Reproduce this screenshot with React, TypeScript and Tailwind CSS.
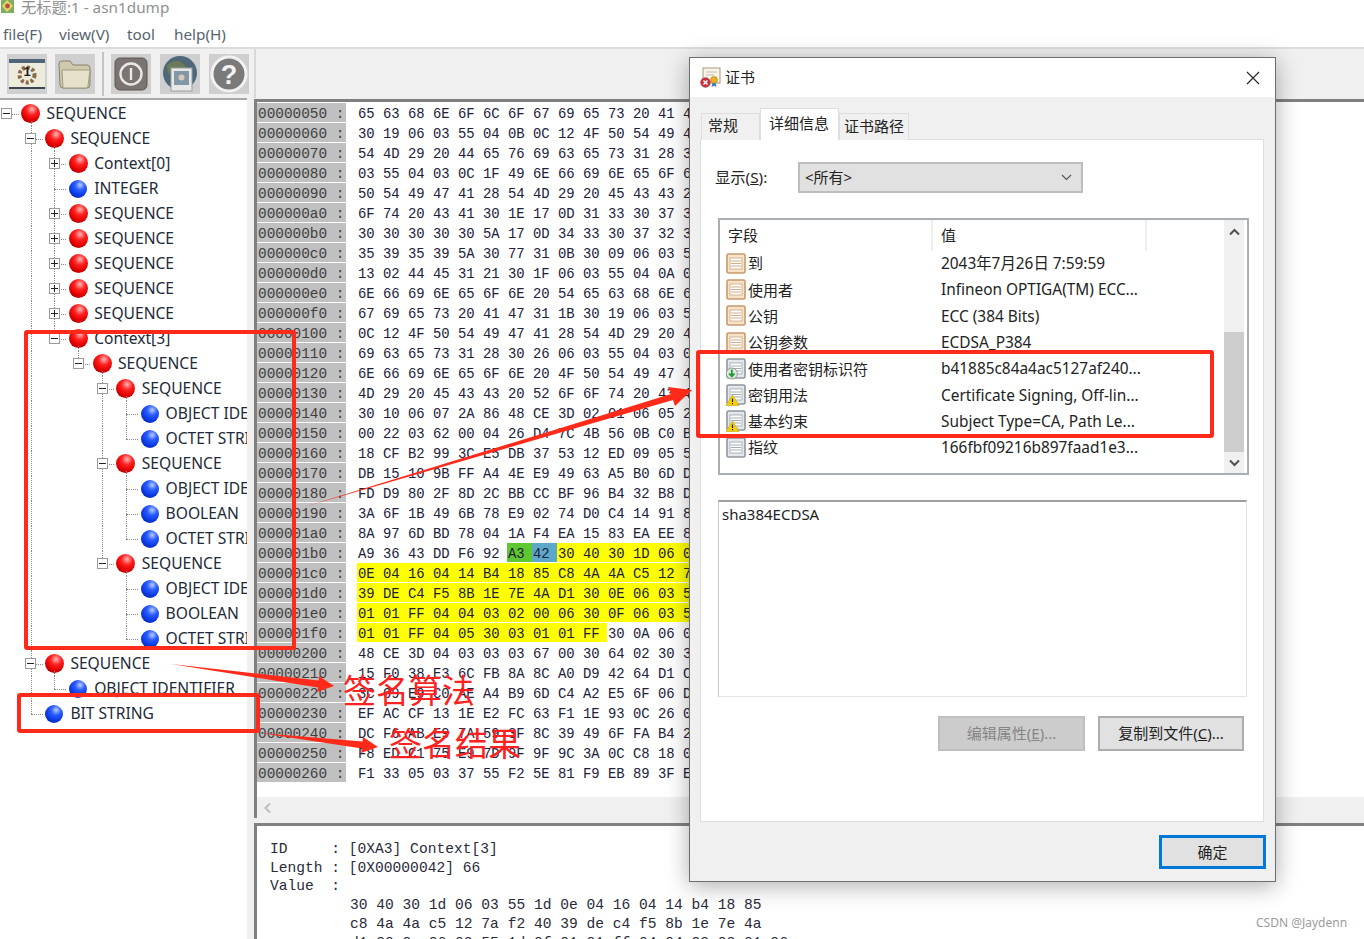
import React from "react";

const sans = "[font-family:'Noto_Sans','Noto_Sans_CJK_SC',sans-serif]";
const mono = "[font-family:'Liberation_Mono',monospace]";

type Row = { d: number; t: string; c: "r" | "b"; e?: "+" | "-"; l: number[]; last?: boolean };
const tree: Row[] = [
  { d: 0, t: "SEQUENCE", c: "r", e: "-", l: [], last: true },
  { d: 1, t: "SEQUENCE", c: "r", e: "-", l: [] },
  { d: 2, t: "Context[0]", c: "r", e: "+", l: [1] },
  { d: 2, t: "INTEGER", c: "b", l: [1] },
  { d: 2, t: "SEQUENCE", c: "r", e: "+", l: [1] },
  { d: 2, t: "SEQUENCE", c: "r", e: "+", l: [1] },
  { d: 2, t: "SEQUENCE", c: "r", e: "+", l: [1] },
  { d: 2, t: "SEQUENCE", c: "r", e: "+", l: [1] },
  { d: 2, t: "SEQUENCE", c: "r", e: "+", l: [1] },
  { d: 2, t: "Context[3]", c: "r", e: "-", l: [1], last: true },
  { d: 3, t: "SEQUENCE", c: "r", e: "-", l: [1], last: true },
  { d: 4, t: "SEQUENCE", c: "r", e: "-", l: [1] },
  { d: 5, t: "OBJECT IDENTIFIER", c: "b", l: [1, 4] },
  { d: 5, t: "OCTET STRING", c: "b", l: [1, 4], last: true },
  { d: 4, t: "SEQUENCE", c: "r", e: "-", l: [1] },
  { d: 5, t: "OBJECT IDENTIFIER", c: "b", l: [1, 4] },
  { d: 5, t: "BOOLEAN", c: "b", l: [1, 4] },
  { d: 5, t: "OCTET STRING", c: "b", l: [1, 4], last: true },
  { d: 4, t: "SEQUENCE", c: "r", e: "-", l: [1], last: true },
  { d: 5, t: "OBJECT IDENTIFIER", c: "b", l: [1] },
  { d: 5, t: "BOOLEAN", c: "b", l: [1] },
  { d: 5, t: "OCTET STRING", c: "b", l: [1], last: true },
  { d: 1, t: "SEQUENCE", c: "r", e: "-", l: [] },
  { d: 2, t: "OBJECT IDENTIFIER", c: "b", l: [1], last: true },
  { d: 1, t: "BIT STRING", c: "b", l: [], last: true },
];

const hex: [string, string][] = [
  ["00000050", "65 63 68 6E 6F 6C 6F 67 69 65 73 20 41 4"],
  ["00000060", "30 19 06 03 55 04 0B 0C 12 4F 50 54 49 4"],
  ["00000070", "54 4D 29 20 44 65 76 69 63 65 73 31 28 3"],
  ["00000080", "03 55 04 03 0C 1F 49 6E 66 69 6E 65 6F 6"],
  ["00000090", "50 54 49 47 41 28 54 4D 29 20 45 43 43 2"],
  ["000000a0", "6F 74 20 43 41 30 1E 17 0D 31 33 30 37 3"],
  ["000000b0", "30 30 30 30 30 5A 17 0D 34 33 30 37 32 3"],
  ["000000c0", "35 39 35 39 5A 30 77 31 0B 30 09 06 03 5"],
  ["000000d0", "13 02 44 45 31 21 30 1F 06 03 55 04 0A 0"],
  ["000000e0", "6E 66 69 6E 65 6F 6E 20 54 65 63 68 6E 6"],
  ["000000f0", "67 69 65 73 20 41 47 31 1B 30 19 06 03 5"],
  ["00000100", "0C 12 4F 50 54 49 47 41 28 54 4D 29 20 4"],
  ["00000110", "69 63 65 73 31 28 30 26 06 03 55 04 03 0"],
  ["00000120", "6E 66 69 6E 65 6F 6E 20 4F 50 54 49 47 4"],
  ["00000130", "4D 29 20 45 43 43 20 52 6F 6F 74 20 43 4"],
  ["00000140", "30 10 06 07 2A 86 48 CE 3D 02 01 06 05 2"],
  ["00000150", "00 22 03 62 00 04 26 D4 7C 4B 56 0B C0 B"],
  ["00000160", "18 CF B2 99 3C E5 DB 37 53 12 ED 09 05 5"],
  ["00000170", "DB 15 10 9B FF A4 4E E9 49 63 A5 B0 6D D"],
  ["00000180", "FD D9 80 2F 8D 2C BB CC BF 96 B4 32 B8 D"],
  ["00000190", "3A 6F 1B 49 6B 78 E9 02 74 D0 C4 14 91 8"],
  ["000001a0", "8A 97 6D BD 78 04 1A F4 EA 15 83 EA EE 8"],
  ["000001b0", "A9 36 43 DD F6 92 A3 42 30 40 30 1D 06 0"],
  ["000001c0", "0E 04 16 04 14 B4 18 85 C8 4A 4A C5 12 7"],
  ["000001d0", "39 DE C4 F5 8B 1E 7E 4A D1 30 0E 06 03 5"],
  ["000001e0", "01 01 FF 04 04 03 02 00 06 30 0F 06 03 5"],
  ["000001f0", "01 01 FF 04 05 30 03 01 01 FF 30 0A 06 0"],
  ["00000200", "48 CE 3D 04 03 03 03 67 00 30 64 02 30 3"],
  ["00000210", "15 F0 38 E3 6C FB 8A 8C A0 D9 42 64 D1 C"],
  ["00000220", "3C 09 E9 C0 AE A4 B9 6D C4 A2 E5 6F 06 D"],
  ["00000230", "EF AC CF 13 1E E2 FC 63 F1 1E 93 0C 26 0"],
  ["00000240", "DC F6 AB E9 7A 59 3F 8C 39 49 6F FA B4 2"],
  ["00000250", "F8 ED C1 75 E9 7D 9F 9F 9C 3A 0C C8 18 0"],
  ["00000260", "F1 33 05 03 37 55 F2 5E 81 F9 EB 89 3F E"],
];

function cellColor(addr: string, i: number): string {
  if (addr === "000001b0") {
    if (i === 6) return "bg-[#5fc72f]";
    if (i === 7) return "bg-[#5ba8cb]";
    if (i > 7) return "bg-[#ffff00]";
  }
  if (addr === "000001c0" || addr === "000001d0" || addr === "000001e0") return "bg-[#ffff00]";
  if (addr === "000001f0" && i < 10) return "bg-[#ffff00]";
  return "";
}

function Ball({ c }: { c: "r" | "b" }) {
  return c === "r" ? (
    <span className="block w-[19px] h-[19px] rounded-full bg-[radial-gradient(circle_at_58%_28%,#ffb8b8_0%,#ff2020_32%,#e00000_62%,#8c0000_100%)]" />
  ) : (
    <span className="block w-[18px] h-[18px] rounded-full bg-[radial-gradient(circle_at_62%_28%,#b8ccff_0%,#2a5cff_30%,#0a38e0_62%,#06208c_100%)]" />
  );
}

function TreeRow({ r }: { r: Row }) {
  const cols = Array.from({ length: r.d }, (_, i) => i);
  return (
    <div className="flex items-center h-[25px] w-max whitespace-nowrap">
      {cols.map((i) => (
        <div key={i} className="relative w-[23.8px] h-full">
          {r.l.includes(i) && <span className="absolute left-1/2 top-0 bottom-0 border-l border-dotted border-[#8a8a8a]" />}
        </div>
      ))}
      <div className="relative w-[23.8px] h-full flex items-center justify-center">
        {r.d > 0 && <span className="absolute left-1/2 top-0 h-1/2 border-l border-dotted border-[#8a8a8a]" />}
        {r.d > 0 && !r.last && <span className="absolute left-1/2 top-1/2 bottom-0 border-l border-dotted border-[#8a8a8a]" />}
        <span className="absolute left-1/2 right-0 top-1/2 border-t border-dotted border-[#8a8a8a]" />
        {r.e && (
          <span className="relative w-[11px] h-[11px] border border-[#9a9a9a] bg-white flex items-center justify-center">
            <span className="w-[7px] h-px bg-[#222]" />
            {r.e === "+" && <span className="absolute w-px h-[7px] bg-[#222]" />}
          </span>
        )}
      </div>
      <div className="relative w-[23.8px] h-full flex items-center justify-center">
        {r.e === "-" && <span className="absolute left-1/2 top-[20px] bottom-0 border-l border-dotted border-[#8a8a8a]" />}
        <Ball c={r.c} />
      </div>
      <span className={`ml-[4px] text-[15.6px] leading-[25px] text-[#1d2a38] ${sans}`}>{r.t}</span>
    </div>
  );
}

function Tb({ children }: { children: React.ReactNode }) {
  return <div className="w-[40px] h-[40px] bg-[#cfcfcf] flex items-center justify-center shrink-0">{children}</div>;
}

function DocIcon({ tone, badge }: { tone: "o" | "g"; badge?: "warn" | "down" | "none" }) {
  const edge = tone === "o" ? "#c89a6e" : "#8f979f";
  const fill = tone === "o" ? "#f6e3c8" : "#e4e8ec";
  return (
    <svg width="21" height="22" viewBox="0 0 21 22" className="shrink-0">
      <rect x="1" y="1" width="18" height="19" rx="1.5" fill={fill} stroke={edge} strokeWidth="1.6" />
      <rect x="4" y="5" width="12" height="11" fill="#ffffff" stroke={edge} strokeWidth="0.7" />
      <path d="M5 8h10M5 10.5h10M5 13h10" stroke={edge} strokeWidth="0.8" />
      {badge === "warn" && (
        <g>
          <path d="M6.5 11 L13 21.5 H0 Z" fill="#f6d000" stroke="#b59a00" strokeWidth="0.5" />
          <path d="M6.5 14.5v3.5M6.5 19v1.3" stroke="#222" strokeWidth="1.2" />
        </g>
      )}
      {badge === "down" && (
        <g>
          <circle cx="5.8" cy="15.5" r="5.5" fill="#dfe8e2" stroke="#7d8a80" strokeWidth="0.8" />
          <path d="M5.8 11.5v6M3.1 15.5l2.7 3 2.7-3" stroke="#1c9a2c" strokeWidth="1.8" fill="none" />
        </g>
      )}
    </svg>
  );
}

const fields: { n: string; v: string; tone: "o" | "g"; b?: "warn" | "down" }[] = [
  { n: "到", v: "2043年7月26日 7:59:59", tone: "o" },
  { n: "使用者", v: "Infineon OPTIGA(TM) ECC...", tone: "o" },
  { n: "公钥", v: "ECC (384 Bits)", tone: "o" },
  { n: "公钥参数", v: "ECDSA_P384", tone: "o" },
  { n: "使用者密钥标识符", v: "b41885c84a4ac5127af240...", tone: "g", b: "down" },
  { n: "密钥用法", v: "Certificate Signing, Off-lin...", tone: "g", b: "warn" },
  { n: "基本约束", v: "Subject Type=CA, Path Le...", tone: "g", b: "warn" },
  { n: "指纹", v: "166fbf09216b897faad1e3...", tone: "g" },
];

export default function App() {
  return (
    <div className={`relative w-[1364px] h-[939px] overflow-hidden bg-white flex flex-col ${sans}`}>
      {/* title */}
      <div className="h-[18px] flex items-start shrink-0 overflow-hidden">
        <svg width="16" height="16" viewBox="0 0 16 16" className="-mt-[2px] shrink-0">
          <rect x="1" y="1" width="13" height="14" fill="#7fae62" />
          <path d="M2 8l5-6 6 6-6 6z" fill="#e8d36a" />
          <circle cx="7.5" cy="8" r="2.4" fill="#b0553c" />
        </svg>
        <span className="ml-[5px] text-[15.3px] leading-[14px] text-[#8f8f8f]">无标题:1 - asn1dump</span>
      </div>
      {/* menu */}
      <div className="h-[29px] flex items-center shrink-0 text-[15.3px] text-[#56636f] pl-[3px] pt-[3px]">
        <span className="w-[56px]">file(F)</span>
        <span className="w-[68px]">view(V)</span>
        <span className="w-[47px]">tool</span>
        <span>help(H)</span>
      </div>
      {/* toolbar */}
      <div className="h-[51px] shrink-0 bg-[#f0f0f0] border-t-2 border-[#dcdcdc] flex items-center pl-[7px]">
        <div className="flex items-center gap-[8px]">
          <Tb>
            <svg width="38" height="34" viewBox="0 0 38 34">
              <rect x="1" y="2" width="36" height="30" fill="#ecebdc" />
              <rect x="1" y="2" width="36" height="4" fill="#51657a" />
              <rect x="1" y="30" width="36" height="2" fill="#3c4650" />
              <circle cx="19" cy="18" r="7.5" fill="none" stroke="#8a6a4a" strokeWidth="4" strokeDasharray="3 2" />
              <circle cx="19" cy="18" r="5" fill="#ecebdc" />
              <text x="19" y="19" textAnchor="middle" fontSize="13" fontWeight="700" fill="#222" fontFamily="Liberation Sans">1</text>
            </svg>
          </Tb>
          <Tb>
            <svg width="34" height="32" viewBox="0 0 34 32">
              <path d="M1 6q0-3 3-3h8l3 4h14q3 0 3 3v17q0 3-3 3H5q-3 0-3-3z" fill="#cfc9ae" stroke="#87826e" strokeWidth="1" />
              <path d="M4 12h28l-2 16q-.3 2-2 2H5z" fill="#e6e1c8" stroke="#a09a80" strokeWidth="1" />
            </svg>
          </Tb>
        </div>
        <div className="w-[2px] h-[44px] bg-[#c4c4c4] mx-[7px]" />
        <div className="flex items-center gap-[9px]">
          <Tb>
            <svg width="34" height="34" viewBox="0 0 34 34">
              <rect x="1" y="1" width="32" height="32" rx="5" fill="#7c7470" stroke="#5a5552" />
              <circle cx="17" cy="17" r="10.5" fill="none" stroke="#e8e8e8" strokeWidth="2.4" />
              <path d="M17 11v12" stroke="#e8e8e8" strokeWidth="2.4" />
            </svg>
          </Tb>
          <Tb>
            <svg width="36" height="38" viewBox="0 0 36 38">
              <circle cx="18" cy="18" r="17" fill="#4f6878" />
              <path d="M5 10q8-6 14-3l5 5-4 3-8-2-6 6z" fill="#6d7a58" />
              <rect x="9" y="13" width="21" height="23" fill="#e8e8e6" stroke="#9aa0a4" />
              <rect x="12" y="16" width="15" height="14" fill="#8397a8" />
              <circle cx="19.5" cy="22.5" r="3" fill="#d8c8b8" />
            </svg>
          </Tb>
          <Tb>
            <svg width="38" height="38" viewBox="0 0 38 38">
              <circle cx="19" cy="19" r="17" fill="#7a7a7a" stroke="#f2f2f2" strokeWidth="3" />
              <text x="19" y="29" textAnchor="middle" fontSize="27" fontWeight="700" fill="#f2f2f2" fontFamily="Liberation Sans">?</text>
            </svg>
          </Tb>
        </div>
        <div className="w-[2px] h-full bg-[#d8d8d8] ml-[5px]" />
      </div>
      {/* panes */}
      <div className="flex-1 min-h-0 flex">
        <div className="w-[247px] shrink-0 border-t-2 border-[#a8a8a8] overflow-hidden pt-[1px]">
          <div className="-ml-[5px]">
            {tree.map((r, i) => (
              <TreeRow key={i} r={r} />
            ))}
          </div>
        </div>
        <div className="w-[7px] shrink-0 bg-[#f0f0f0]" />
        <div className="flex-1 min-w-0 flex flex-col bg-[#f0f0f0]">
          <div className="h-[1px] shrink-0" />
          <div className="h-[719px] shrink-0 flex flex-col border-l-[3px] border-t-[3px] border-[#808080] overflow-hidden bg-white">
            <div className="flex-1 min-h-0 pt-[1px]">
              {hex.map(([a, b]) => (
                <div key={a} className="flex h-[20px] whitespace-nowrap">
                  <div className={`w-[89px] h-[19px] pl-[1px] bg-[#c0c0c0] text-[14.4px] leading-[23px] text-[#3f3f3f] shrink-0 ${mono}`}>{a} :</div>
                  <div className="w-[11px] shrink-0" />
                  <div className={`flex text-[13.9px] leading-[23px] text-[#20203a] ${mono}`}>
                    {b.split(" ").map((x, i) => (
                      <span key={i} className={`w-[25px] h-[19px] pl-[1px] shrink-0 ${cellColor(a, i)}`}>{x}</span>
                    ))}
                  </div>
                </div>
              ))}
            </div>
            <div className="h-[21px] shrink-0 bg-[#f0f0f0] flex items-center pl-[6px]">
              <svg width="10" height="12" viewBox="0 0 10 12"><path d="M7 1.5L2.5 6 7 10.5" fill="none" stroke="#c0c0c0" strokeWidth="2" /></svg>
            </div>
          </div>
          <div className="h-[5px] shrink-0 bg-[#f0f0f0]" />
          <div className={`flex-1 min-h-0 border-l-[3px] border-t-[3px] border-[#808080] bg-white pl-[13px] pt-[14px] text-[14.6px] leading-[18.7px] text-[#2a2a3a] whitespace-pre overflow-hidden ${mono}`}>
            <div>ID     : [0XA3] Context[3]</div>
            <div>Length : [0X00000042] 66</div>
            <div>Value  :</div>
            <div className="pl-[80px]">30 40 30 1d 06 03 55 1d 0e 04 16 04 14 b4 18 85</div>
            <div className="pl-[80px]">c8 4a 4a c5 12 7a f2 40 39 de c4 f5 8b 1e 7e 4a</div>
            <div className="pl-[80px]">d1 30 0e 06 03 55 1d 0f 01 01 ff 04 04 03 02 01 06</div>
          </div>
        </div>
      </div>

      {/* certificate dialog */}
      <div className="absolute left-[689px] top-[57px] w-[587px] h-[825px] bg-[#f0f0f0] border border-[#6e6e6e] shadow-[0_4px_22px_rgba(0,0,0,0.32)] flex flex-col text-[15px] text-[#222]">
        <div className="h-[39px] bg-white flex items-center shrink-0 pl-[10px] pr-[15px]">
          <svg width="22" height="22" viewBox="0 0 22 22" className="shrink-0">
            <rect x="3" y="1" width="17" height="15" fill="#f8f4ea" stroke="#a8977a" />
            <path d="M6 5h11M6 8h8" stroke="#c8bca8" />
            <circle cx="14" cy="13" r="3.4" fill="#eab020" stroke="#a67a10" strokeWidth="0.6" />
            <path d="M12.5 16l-1 4 2.5-1.3 2.5 1.3-1-4" fill="#3e78c8" />
            <circle cx="5.5" cy="15.5" r="5" fill="#d02a3a" stroke="#8a8a8a" strokeWidth="0.6" />
            <path d="M3.5 13.5l4 4M7.5 13.5l-4 4" stroke="#fff" strokeWidth="1.5" />
          </svg>
          <span className="ml-[3px]">证书</span>
          <svg width="14" height="14" viewBox="0 0 14 14" className="ml-auto">
            <path d="M1 1l12 12M13 1L1 13" stroke="#222" strokeWidth="1.1" />
          </svg>
        </div>
        <div className="flex items-end h-[43px] shrink-0 pl-[11px] relative z-10 -mb-px">
          <div className="w-[59px] h-[27px] bg-[#f0f0f0] border border-b-0 border-[#dedede] flex items-center pl-[6px] leading-none pb-[3px]">常规</div>
          <div className="w-[79px] h-[32px] bg-white border border-b-0 border-[#dedede] flex items-center pl-[8px] leading-none pb-[2px]">详细信息</div>
          <div className="w-[70px] h-[27px] bg-[#f0f0f0] border border-b-0 border-[#dedede] flex items-center pl-[4px] leading-none pb-[2px]">证书路径</div>
        </div>
        <div className="ml-[10px] w-[564px] h-[683px] shrink-0 bg-white border border-[#dedede] pt-[22px]">
          <div className="flex items-center h-[31px] pl-[14px]">
            <span className="w-[83px] text-[15.3px]">显示(<span className="underline">S</span>):</span>
            <div className="w-[285px] h-[31px] bg-[#e1e1e1] border-2 border-[#bdbdbd] flex items-center pl-[5px] pr-[9px]">
              <span>&lt;所有&gt;</span>
              <svg width="11" height="7" viewBox="0 0 11 7" className="ml-auto"><path d="M1 1l4.5 4.5L10 1" fill="none" stroke="#555" strokeWidth="1.2" /></svg>
            </div>
          </div>
          <div className="ml-[17px] mt-[25px] w-[531px] h-[257px] border-2 border-[#a8afb5] flex">
            <div className="flex-1 min-w-0">
              <div className="flex h-[30.5px] items-center">
                <span className="w-[213px] pl-[8px] border-r-2 border-[#efefef] h-full flex items-center">字段</span>
                <span className="w-[214px] pl-[8px] border-r-2 border-[#efefef] h-full flex items-center">值</span>
              </div>
              {fields.map((f) => (
                <div key={f.n} className="flex h-[26.3px] items-center whitespace-nowrap">
                  <div className="w-[213px] pl-[6px] flex items-center gap-[1px]">
                    <DocIcon tone={f.tone} badge={f.b} />
                    <span>{f.n}</span>
                  </div>
                  <span className="pl-[8px] text-[15.4px]">{f.v}</span>
                </div>
              ))}
            </div>
            <div className="w-[20px] shrink-0 bg-[#f0f0f0] flex flex-col mr-[3px]">
              <div className="h-[24px] flex items-center justify-center shrink-0">
                <svg width="11" height="8" viewBox="0 0 11 8"><path d="M1 6.5l4.5-4.5L10 6.5" fill="none" stroke="#505050" strokeWidth="2" /></svg>
              </div>
              <div className="h-[88px] shrink-0" />
              <div className="h-[120px] shrink-0 bg-[#cdcdcd]" />
              <div className="flex-1 flex items-center justify-center">
                <svg width="11" height="8" viewBox="0 0 11 8"><path d="M1 1.5L5.5 6 10 1.5" fill="none" stroke="#505050" strokeWidth="2" /></svg>
              </div>
            </div>
          </div>
          <div className="ml-[17px] mt-[25px] w-[529px] h-[197px] border-t-2 border-l border-r border-b border-t-[#a0a0a0] border-l-[#c8c8c8] border-r-[#e4e4e4] border-b-[#e4e4e4] px-[3px] pt-[1px]">sha384ECDSA</div>
          <div className="mt-[19px] ml-[237px] flex gap-[13px]">
            <div className="w-[147px] h-[35px] bg-[#cccccc] border-2 border-[#bfbfbf] flex items-center justify-center text-[#858585]">编辑属性(<span className="underline">E</span>)...</div>
            <div className="w-[146px] h-[35px] bg-[#e1e1e1] border-2 border-[#adadad] flex items-center justify-center">复制到文件(<span className="underline">C</span>)...</div>
          </div>
        </div>
        <div className="flex-1 flex justify-end pr-[9px] pt-[13px]">
          <div className="w-[107px] h-[34px] bg-[#e1e1e1] border-[3px] border-[#0078d7] flex items-center justify-center">确定</div>
        </div>
      </div>

      {/* annotations */}
      <div className="absolute left-[24px] top-[330px] w-[272px] h-[320px] border-4 border-[#ff2a1a] rounded-[3px]" />
      <div className="absolute left-[17px] top-[693px] w-[243px] h-[40px] border-4 border-[#ff2a1a] rounded-[3px]" />
      <div className="absolute left-[696px] top-[350px] w-[518px] h-[88px] border-4 border-[#ff2a1a] rounded-[3px]" />
      <svg className="absolute left-0 top-0 w-[1364px] h-[939px] pointer-events-none" viewBox="0 0 1364 939">
        <polygon points="304,507 673,400 675,406 692,390 668,387 671,394" fill="#ff2a1a" />
        <polygon points="171,664 318,687.5 317,692 334,686 319,676 318.5,680.5" fill="#ff2a1a" />
        <polygon points="260,733 362,748.5 361,753 378,747 363,737 362.5,741.5" fill="#ff2a1a" />
      </svg>
      <div className="absolute left-[343px] top-[669px] text-[33px] leading-[44px] text-[#ff2020] whitespace-nowrap">签名算法</div>
      <div className="absolute left-[389px] top-[722px] text-[33px] leading-[44px] text-[#ff2020] whitespace-nowrap">签名结果</div>
      <div className="absolute left-[1256px] top-[915px] text-[12px] leading-[16px] text-[#9c9c9c] whitespace-nowrap">CSDN @Jaydenn</div>
    </div>
  );
}
